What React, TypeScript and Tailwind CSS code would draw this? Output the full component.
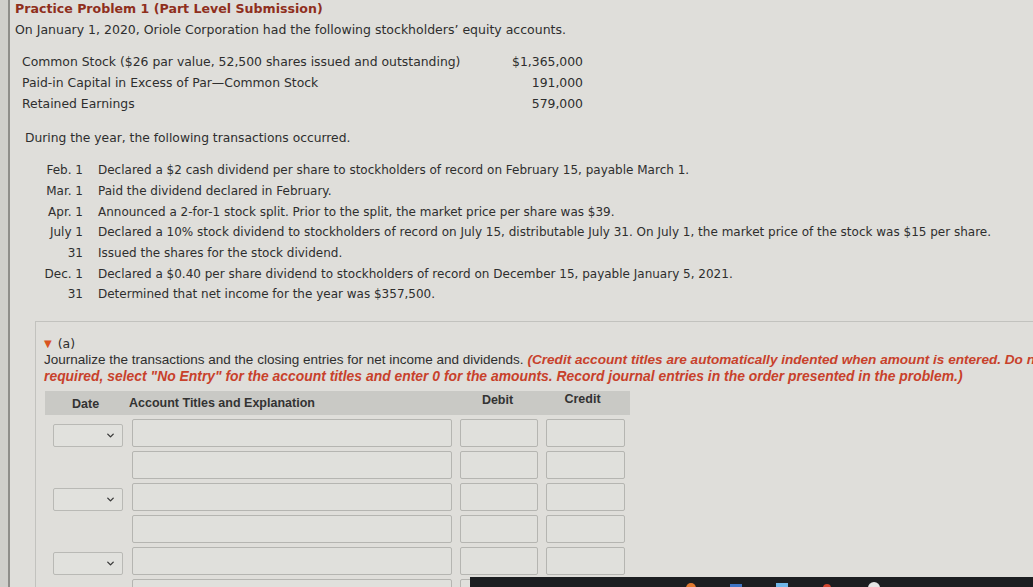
import { ChevronDown } from "lucide-react";

const accounts = [
  { label: "Common Stock ($26 par value, 52,500 shares issued and outstanding)", amount: "$1,365,000" },
  { label: "Paid-in Capital in Excess of Par\u2014Common Stock", amount: "191,000" },
  { label: "Retained Earnings", amount: "579,000" },
];

const transactions = [
  { date: "Feb. 1", text: "Declared a $2 cash dividend per share to stockholders of record on February 15, payable March 1." },
  { date: "Mar. 1", text: "Paid the dividend declared in February." },
  { date: "Apr. 1", text: "Announced a 2-for-1 stock split. Prior to the split, the market price per share was $39." },
  { date: "July 1", text: "Declared a 10% stock dividend to stockholders of record on July 15, distributable July 31. On July 1, the market price of the stock was $15 per share." },
  { date: "31", text: "Issued the shares for the stock dividend." },
  { date: "Dec. 1", text: "Declared a $0.40 per share dividend to stockholders of record on December 15, payable January 5, 2021." },
  { date: "31", text: "Determined that net income for the year was $357,500." },
];

const rows = [true, false, true, false, true, false];

function JournalRow({ hasDate }: { hasDate: boolean }) {
  return (
    <div className="flex items-center h-[32px]">
      <div className="w-[87px] pl-[8px] flex items-center">
        {hasDate && (
          <div className="w-[70px] h-[23px] mt-[6px] border border-[#b9b9b5] bg-[#e1e1dd] rounded-[2px] flex items-center justify-end pr-[6px]">
            <ChevronDown size={11} strokeWidth={3} className="text-[#3a3a3a]" />
          </div>
        )}
      </div>
      <div className="w-[320px] h-[28px] border border-[#b5b5b1] bg-[#e0e0dc] rounded-[2px]" />
      <div className="w-[78px] h-[28px] ml-[8px] border border-[#b5b5b1] bg-[#e0e0dc] rounded-[2px]" />
      <div className="w-[79px] h-[28px] ml-[8px] border border-[#b5b5b1] bg-[#e0e0dc] rounded-[2px]" />
    </div>
  );
}

export default function App() {
  return (
    <div
      className="w-[1033px] h-[587px] overflow-hidden bg-[#dfdeda] relative flex text-[#2e2e2e]"
      style={{ fontFamily: '"DejaVu Sans", Verdana, sans-serif' }}
    >
      <div className="w-[10px] shrink-0 bg-[#cfcfcb] border-r-2 border-[#8e8e8a]" />

      <div className="flex-1 flex flex-col">
        <div className="pl-[5px]">
          <h1 className="text-[12.6px] font-bold leading-[16px] pt-[1px] text-[#8f2f1d]">
            Practice Problem 1 (Part Level Submission)
          </h1>
          <p className="text-[12.5px] leading-[16px] mt-[5px]">
            On January 1, 2020, Oriole Corporation had the following stockholders’ equity accounts.
          </p>

          <div className="ml-[7px] mt-[14px] w-[561px] text-[12.4px]">
            {accounts.map((a) => (
              <div key={a.label} className="flex justify-between h-[21px] items-center">
                <span>{a.label}</span>
                <span>{a.amount}</span>
              </div>
            ))}
          </div>

          <p className="ml-[10px] mt-[13px] text-[12.3px] leading-[20px]">
            During the year, the following transactions occurred.
          </p>

          <div className="ml-[10px] mt-[12px] text-[12px]">
            {transactions.map((t, i) => (
              <div key={i} className="flex h-[20.7px] items-center">
                <span className="w-[58px] text-right">{t.date}</span>
                <span className="ml-[15px] whitespace-nowrap">{t.text}</span>
              </div>
            ))}
          </div>
        </div>

        <div className="mt-[10px] ml-[28px] h-[1px] bg-[#c4c4c0]" />

        <div className="mt-[6px] ml-[25px] flex-1 border-l border-t border-[#c2c2be] pl-[8px] pt-[15px]">
          <div className="flex items-center h-[14px] text-[12.5px] leading-[14px]">
            <span className="text-[#d9541f] text-[10px] mr-[6px]">▼</span>
            <span>(a)</span>
          </div>
          <div
            className="text-[13.9px] leading-[16px] whitespace-nowrap"
            style={{ fontFamily: '"Liberation Sans Narrow", "Liberation Sans", sans-serif' }}
          >
            <div>
              <span className="text-[13.5px]">
                Journalize the transactions and the closing entries for net income and dividends.
              </span>{" "}
              <span className="text-[#c8412b] font-bold italic text-[13.6px]">
                (Credit account titles are automatically indented when amount is entered. Do not
              </span>
            </div>
            <div className="text-[#c8412b] font-bold italic">
              required, select "No Entry" for the account titles and enter 0 for the amounts. Record journal entries in the order presented in the problem.)
            </div>
          </div>

          <div className="mt-[7px] ml-[1px] w-[585px]">
            <div
              className="flex items-center h-[24px] bg-[#c9c9c5] text-[12.5px] font-bold text-[#333]"
              style={{ fontFamily: '"Liberation Sans Narrow", "Liberation Sans", sans-serif' }}
            >
              <span className="w-[80px] pl-[27px] pt-[4px]">Date</span>
              <span className="w-[335px] pl-[4px] pt-[2px]">Account Titles and Explanation</span>
              <span className="w-[75px] text-center pb-[4px]">Debit</span>
              <span className="w-[95px] text-center pb-[6px]">Credit</span>
            </div>
            <div className="mt-[2px]">
              {rows.map((r, i) => (
                <JournalRow key={i} hasDate={r} />
              ))}
            </div>
          </div>
        </div>
      </div>

      <div className="absolute left-[470px] right-0 top-[577px] h-[10px] bg-[#1c1e21] overflow-hidden">
        <div className="absolute left-[216px] top-[6px] w-[10px] h-[10px] rounded-full bg-[#e0782f]" />
        <div className="absolute left-[260px] top-[7px] w-[12px] h-[8px] bg-[#3f74c4]" />
        <div className="absolute left-[306px] top-[6px] w-[12px] h-[8px] bg-[#6fb6e8]" />
        <div className="absolute left-[353px] top-[7px] w-[8px] h-[8px] rounded-full bg-[#d2452e]" />
        <div className="absolute left-[398px] top-[5px] w-[12px] h-[12px] rounded-full bg-[#e6e6e6]" />
      </div>
    </div>
  );
}
